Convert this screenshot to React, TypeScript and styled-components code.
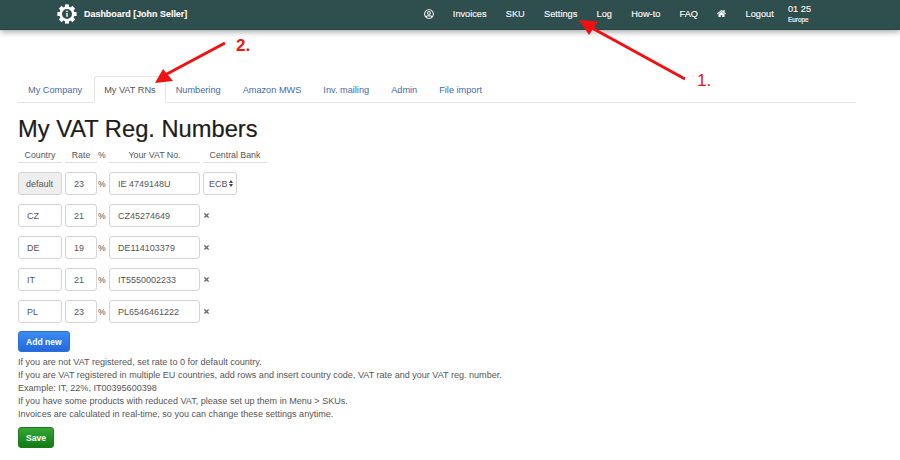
import React from "react";
import styled, { createGlobalStyle } from "styled-components";
import { FaHome, FaRegUserCircle, FaTimes } from "react-icons/fa";

const tabs = ["My Company", "My VAT RNs", "Numbering", "Amazon MWS", "Inv. mailing", "Admin", "File import"];
const menu = ["Invoices", "SKU", "Settings", "Log", "How-to", "FAQ"];
const rows = [
  { country: "CZ", rate: "21", vat: "CZ45274649" },
  { country: "DE", rate: "19", vat: "DE114103379" },
  { country: "IT", rate: "21", vat: "IT5550002233" },
  { country: "PL", rate: "23", vat: "PL6546461222" },
];
const notes = [
  "If you are not VAT registered, set rate to 0 for default country.",
  "If you are VAT registered in multiple EU countries, add rows and insert country code, VAT rate and your VAT reg. number.",
  "Example: IT, 22%, IT00395600398",
  "If you have some products with reduced VAT, please set up them in Menu > SKUs.",
  "Invoices are calculated in real-time, so you can change these settings anytime.",
];

function Gear() {
  return (
    <svg width="20" height="20" viewBox="0 0 20 20">
      {[0, 45, 90, 135, 180, 225, 270, 315].map((a) => (
        <rect key={a} x="8" y="0.4" width="4" height="4" fill="#fff" transform={`rotate(${a} 10 10)`} />
      ))}
      <circle cx="10" cy="10" r="6.3" fill="#2f4f4f" stroke="#fff" strokeWidth="2.6" />
      <circle cx="10" cy="7.4" r="0.8" fill="#fff" />
      <rect x="9.3" y="9" width="1.4" height="3.8" fill="#fff" />
    </svg>
  );
}

function App() {
  return (
    <Page>
      <GlobalStyle />
      <Navbar>
        <Brand>
          <Gear />
          <BrandName>Dashboard [John Seller]</BrandName>
        </Brand>
        <Menu>
          <MenuIcon>
            <FaRegUserCircle size={10} />
          </MenuIcon>
          {menu.map((m) => (
            <MenuItem key={m}>{m}</MenuItem>
          ))}
          <MenuIcon>
            <FaHome size={9} />
          </MenuIcon>
          <MenuItem>Logout</MenuItem>
          <Clock>
            <span>01 25</span>
            <small>Europe</small>
          </Clock>
        </Menu>
      </Navbar>

      <Content>
        <Tabs>
          {tabs.map((t) => (
            <Tab key={t} $active={t === "My VAT RNs"}>
              {t}
            </Tab>
          ))}
        </Tabs>

        <Title>My VAT Reg. Numbers</Title>

        <HeadRow>
          <HeadCell $w={44}>Country</HeadCell>
          <HeadCell $w={32}>Rate</HeadCell>
          <Percent>%</Percent>
          <HeadCell $w={91}>Your VAT No.</HeadCell>
          <HeadCell $w={64}>Central Bank</HeadCell>
        </HeadRow>

        <Row>
          <CountryInput $locked readOnly defaultValue="default" />
          <RateInput readOnly defaultValue="23" />
          <Percent>%</Percent>
          <VatInput readOnly defaultValue="IE 4749148U" />
          <BankSelect>
            <span>ECB</span>
            <Updown />
          </BankSelect>
        </Row>
        {rows.map((r) => (
          <Row key={r.country}>
            <CountryInput readOnly defaultValue={r.country} />
            <RateInput readOnly defaultValue={r.rate} />
            <Percent>%</Percent>
            <VatInput readOnly defaultValue={r.vat} />
            <Remove>
              <FaTimes size={7} />
            </Remove>
          </Row>
        ))}

        <AddButton $color="blue">Add new</AddButton>
        <Notes>
          {notes.map((n) => (
            <p key={n}>{n}</p>
          ))}
        </Notes>
        <Button $color="green">Save</Button>
      </Content>

      <Arrows width="900" height="460" viewBox="0 0 900 460">
        <g stroke="#f01212" strokeWidth="3" fill="none">
          <line x1="685" y1="79" x2="592" y2="28" />
          <line x1="225" y1="43" x2="165" y2="75" />
        </g>
        <g fill="#f01212">
          <path d="M579 20 L598 21.5 L589 35 Z" />
          <path d="M155 83 L163 69 L173 81 Z" />
        </g>
      </Arrows>
      <Callout $x={236} $y={36} $heavy>2.</Callout>
      <Callout $x={697} $y={71}>1.</Callout>
    </Page>
  );
}

//@ styled ////////////////////////////////////////
const GlobalStyle = createGlobalStyle`
  html, body {
    margin: 0;
    background: #fff;
    font-family: "Liberation Sans", Arial, sans-serif;
  }
`;

const Page = styled.div`
  position: relative;
  width: 900px;
  height: 460px;
  overflow: hidden;
`;

const Navbar = styled.header`
  height: 30px;
  box-sizing: border-box;
  padding: 0 89px 2px 57px;
  display: flex;
  align-items: center;
  justify-content: space-between;
  background: #2f4f4f;
  border-bottom: 1px solid #284444;
  box-shadow: 0 2px 6px rgba(0, 0, 0, 0.35);
  color: #fff;
  font-size: 9.2px;
  text-shadow: 0 0 1px #000;
  -webkit-text-stroke: 0.2px #fff;
`;

const Brand = styled.div`
  display: flex;
  align-items: center;
  gap: 7px;
`;

const BrandName = styled.span`
  font-weight: bold;
  font-size: 8.95px;
`;

const Menu = styled.nav`
  display: flex;
  align-items: center;
  gap: 19.3px;
`;

const MenuItem = styled.span`
  white-space: nowrap;
`;

const MenuIcon = styled.span`
  display: flex;
`;

const Clock = styled.div`
  display: flex;
  flex-direction: column;
  margin-left: -5px;
  line-height: 11px;

  & small {
    font-size: 6.4px;
    line-height: 9px;
  }
`;

const Content = styled.main`
  width: 839px;
  margin-left: 17px;
  padding-top: 46px;
`;

const Tabs = styled.div`
  display: flex;
  height: 27px;
  box-sizing: border-box;
  border-bottom: 1px solid #e4e4e4;
`;

const Tab = styled.div<{ $active?: boolean }>`
  height: 27px;
  box-sizing: border-box;
  margin: 0 ${({ $active }) => ($active ? "-1px 0 1px" : "0")};
  padding: 0 ${({ $active }) => ($active ? "9px" : "10px")};
  display: flex;
  align-items: center;
  font-size: 9.2px;
  color: ${({ $active }) => ($active ? "#555" : "#3f6aa5")};
  background: ${({ $active }) => ($active ? "#fff" : "transparent")};
  border: 1px solid ${({ $active }) => ($active ? "#e4e4e4" : "transparent")};
  border-bottom-color: ${({ $active }) => ($active ? "#fff" : "transparent")};
  border-radius: 3px 3px 0 0;
`;

const Title = styled.h1`
  margin: 13px 0 7px 1px;
  font-size: 23.7px;
  line-height: 26px;
  font-weight: normal;
  color: #1c1c1c;
  -webkit-text-stroke: 0.2px #1c1c1c;
`;

const HeadRow = styled.div`
  display: flex;
  gap: 3px;
  margin: 0 0 9px 1px;
`;

const HeadCell = styled.div<{ $w: number }>`
  width: ${({ $w }) => $w}px;
  height: 14px;
  line-height: 12px;
  box-sizing: border-box;
  text-align: center;
  font-size: 8.8px;
  color: #555;
  white-space: nowrap;
  border-bottom: 1px solid #ddd;
`;

const Percent = styled.span`
  width: 9px;
  margin: 0 -1px 0 -2px;
  font-size: 8.6px;
  line-height: 12px;
  color: #555;
`;

const Row = styled.div`
  display: flex;
  align-items: center;
  gap: 3px;
  height: 23px;
  margin: 0 0 9px 1px;
`;

const Field = styled.input`
  height: 23px;
  box-sizing: border-box;
  border: 1px solid #d4d4d4;
  border-radius: 3px;
  background: #fff;
  font: 9px "Liberation Sans", Arial, sans-serif;
  color: #555;
  outline: none;
`;

const CountryInput = styled(Field)<{ $locked?: boolean }>`
  width: 44px;
  padding: 0 0 0 ${({ $locked }) => ($locked ? "7px" : "8px")};
  background: ${({ $locked }) => ($locked ? "#eee" : "#fff")};
`;

const RateInput = styled(Field)`
  width: 32px;
  padding: 0 0 0 8px;
`;

const VatInput = styled(Field)`
  width: 91px;
  padding: 0 0 0 8px;
`;

const BankSelect = styled.div`
  width: 34px;
  height: 23px;
  box-sizing: border-box;
  padding: 0 3px 0 5px;
  display: flex;
  align-items: center;
  justify-content: space-between;
  border: 1px solid #d4d4d4;
  border-radius: 3px;
  font-size: 9px;
  color: #555;
`;

const Updown = styled.i`
  display: flex;
  flex-direction: column;
  gap: 1px;

  &::before,
  &::after {
    content: "";
    border-left: 2px solid transparent;
    border-right: 2px solid transparent;
  }

  &::before {
    border-bottom: 3px solid #444;
  }

  &::after {
    border-top: 3px solid #444;
  }
`;

const Remove = styled.span`
  display: flex;
  color: #666;
`;

const Button = styled.button<{ $color: "blue" | "green" }>`
  display: block;
  height: 21px;
  padding: 0 7px;
  margin-left: 1px;
  border-radius: 3px;
  border: 1px solid ${({ $color }) => ($color === "blue" ? "#2a6fd6" : "#1b7a1b")};
  background: ${({ $color }) =>
    $color === "blue"
      ? "linear-gradient(#3c8cf2, #2468dc)"
      : "linear-gradient(#36a636, #127a12)"};
  color: #fff;
  font: bold 8.6px "Liberation Sans", Arial, sans-serif;
`;

const AddButton = styled(Button)`
  margin-top: -1px;
`;

const Notes = styled.div`
  margin: 4px 0 6px 1px;
  font-size: 9.05px;
  line-height: 13px;
  color: #555;

  & p {
    margin: 0;
    white-space: nowrap;
  }
`;

const Arrows = styled.svg`
  position: absolute;
  left: 0;
  top: 0;
  pointer-events: none;
`;

const Callout = styled.span<{ $x: number; $y: number; $heavy?: boolean }>`
  position: absolute;
  left: ${({ $x }) => $x}px;
  top: ${({ $y }) => $y}px;
  font-size: 17px;
  line-height: 20px;
  font-weight: ${({ $heavy }) => ($heavy ? "bold" : "normal")};
  color: #f01212;
`;

export default App;
